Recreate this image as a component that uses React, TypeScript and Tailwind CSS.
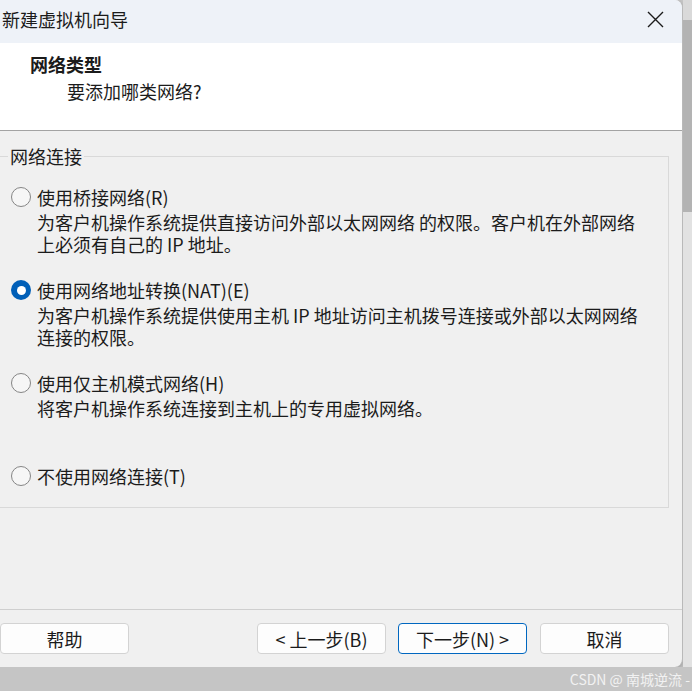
import React from "react";

function Radio({ checked }: { checked?: boolean }) {
  if (checked) {
    return (
      <span className="flex h-[20px] w-[20px] shrink-0 items-center justify-center rounded-full bg-[#005fb8]">
        <span className="h-[9px] w-[9px] rounded-full bg-white" />
      </span>
    );
  }
  return <span className="h-[20px] w-[20px] shrink-0 rounded-full border border-[#858585] bg-[#f6f6f6]" />;
}

function Option({
  label,
  lines,
  checked,
  className,
}: {
  label: string;
  lines?: string[];
  checked?: boolean;
  className?: string;
}) {
  return (
    <div className={className}>
      <div className="flex h-[22px] items-center">
        <span className="ml-[11px] flex">
          <Radio checked={checked} />
        </span>
        <span className="ml-[6px] leading-[22px]">{label}</span>
      </div>
      {lines && (
        <div className="ml-[37px] mt-[3px] flex flex-col">
          {lines.map((l) => (
            <div key={l} className="h-[22px] whitespace-nowrap leading-[22px]">
              {l}
            </div>
          ))}
        </div>
      )}
    </div>
  );
}

function Btn({ children, primary }: { children: React.ReactNode; primary?: boolean }) {
  return (
    <div
      className={
        "flex h-[31px] w-[129px] items-center justify-center rounded-[4px] bg-[#fdfdfd] text-[18px] leading-[22px] " +
        (primary ? "border border-[#0067c0]" : "border border-[#d3d3d3]")
      }
    >
      {children}
    </div>
  );
}

export default function App() {
  return (
    <div className="flex h-[691px] w-[692px] flex-col overflow-hidden bg-[#c9c9c9] font-['Noto_Sans_CJK_SC',sans-serif] text-[18px] text-[#1b1b1b]">
      <div className="flex h-[667px] shrink-0">
        {/* dialog */}
        <div className="flex w-[683px] shrink-0 flex-col overflow-hidden rounded-r-[8px] border-r border-[#b9b9b9] bg-[#f0f0f0] shadow-[0_2px_6px_rgba(0,0,0,0.25)]">
          {/* title bar */}
          <div className="flex h-[43px] shrink-0 items-center justify-between bg-[#eef2f8] pb-[5px] pl-[2px] pr-[18px]">
            <span className="leading-[22px]">新建虚拟机向导</span>
            <svg width="17" height="17" viewBox="0 0 17 17">
              <path d="M1 1 L16 16 M16 1 L1 16" stroke="#1b1b1b" strokeWidth="1.4" />
            </svg>
          </div>
          {/* header */}
          <div className="h-[88px] shrink-0 border-b border-[#a3a3a3] bg-white">
            <div className="pl-[30px] pt-[10px] font-bold leading-[22px]">网络类型</div>
            <div className="mt-[5px] pl-[67px] leading-[22px]">要添加哪类网络?</div>
          </div>
          {/* body */}
          <div className="flex h-[479px] shrink-0 flex-col border-b border-[#cfcfcf]">
            <div className="relative mr-[13px] mt-[25px] h-[352px] border-b border-r border-t border-[#d9d9d9]">
              <span className="absolute left-[8px] top-[-12px] bg-[#f0f0f0] px-[2px] leading-[22px]">网络连接</span>
              <Option
                className="pt-[29px]"
                label="使用桥接网络(R)"
                lines={["为客户机操作系统提供直接访问外部以太网网络 的权限。客户机在外部网络", "上必须有自己的 IP 地址。"]}
              />
              <Option
                className="mt-[24px]"
                checked
                label="使用网络地址转换(NAT)(E)"
                lines={["为客户机操作系统提供使用主机 IP 地址访问主机拨号连接或外部以太网网络", "连接的权限。"]}
              />
              <Option className="mt-[24px]" label="使用仅主机模式网络(H)" lines={["将客户机操作系统连接到主机上的专用虚拟网络。"]} />
              <Option className="mt-[46px]" label="不使用网络连接(T)" />
            </div>
          </div>
          {/* buttons */}
          <div className="flex flex-1 items-start pt-[13px]">
            <Btn>帮助</Btn>
            <div className="ml-[128px] flex gap-[12px]">
              <Btn>&lt; 上一步(B)</Btn>
              <Btn primary>下一步(N) &gt;</Btn>
            </div>
            <div className="ml-[13px]">
              <Btn>取消</Btn>
            </div>
          </div>
        </div>
        {/* right strip */}
        <div className="flex w-[9px] flex-col">
          <div className="h-[20px] bg-[#d9d9d9]" />
          <div className="h-[192px] bg-[#b3b3b3]" />
          <div className="flex-1 bg-[#e2e2e2]" />
        </div>
      </div>
      <div className="flex h-[24px] items-center justify-end bg-[#c5c5c5] pr-[2px] text-[14px] leading-[18px] text-[#f2f2f2]">
        CSDN @ 南城逆流 -
      </div>
    </div>
  );
}
